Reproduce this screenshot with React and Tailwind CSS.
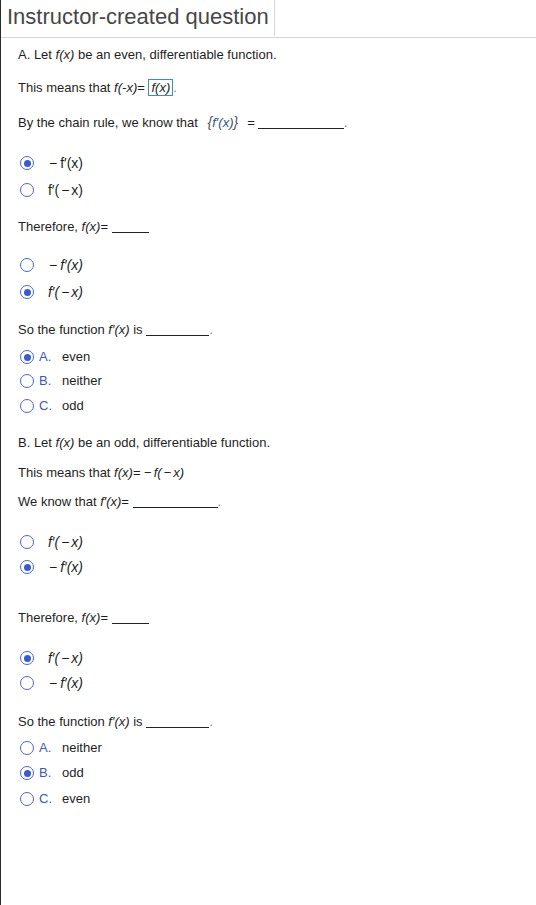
import React from 'react';

const Radio = ({ checked }) => (
    <span className="w-[14px] h-[14px] shrink-0 rounded-full border-[1.5px] border-[#4a66d6] flex items-center justify-center bg-white">
        {checked && <span className="w-[7px] h-[7px] rounded-full bg-[#3a59d6]" />}
    </span>
);

const Blank = ({ w }) => (
    <span className="inline-block border-b border-[#222] translate-y-[2px]" style={{ width: w }} />
);

const M = ({ children }) => <i className="italic">{children}</i>;

// radio row with right-aligned math label
const MathOption = ({ checked, children, className }) => (
    <div className={`h-[20px] flex items-center ${className}`}>
        <span className="ml-[2px]"><Radio checked={checked} /></span>
        <span className="ml-[13px] w-[36px] flex justify-end whitespace-nowrap text-[14px]">{children}</span>
    </div>
);

const LetterOption = ({ checked, letter, label, className }) => (
    <div className={`h-[20px] flex items-center ${className}`}>
        <span className="ml-[2px]"><Radio checked={checked} /></span>
        <span className="ml-[5px] w-[23px] text-[#3a55cc]">{letter}</span>
        <span>{label}</span>
    </div>
);

const Line = ({ children, className }) => (
    <div className={`h-[20px] flex items-center whitespace-nowrap ${className}`}>
        <span>{children}</span>
    </div>
);

export default function App() {
    return (
        <div className="min-h-[905px] bg-white border-l border-[#2a2a2a] font-['Liberation_Sans',Arial,sans-serif] text-[13px] text-[#1e1e1e]">
            {/* header tab */}
            <div className="flex border-b border-[#d3d6dd] h-[38px]">
                <div className="h-[36px] pl-[6px] pr-[5px] border-r border-[#d3d6dd] text-[22px] leading-[34px] text-[#474747]">
                    Instructor-created question
                </div>
            </div>

            <div className="pl-[17px]">
                {/* Part A */}
                <Line className="mt-[7px]">A. Let <M>f(x)</M> be an even, differentiable function.</Line>
                <Line className="mt-[13px]">
                    This means that <M>f(-x)</M>={' '}
                    <span className="inline-block border border-[#3a8fbf] px-[2px] leading-[15px]"><M>f(x)</M></span>
                    <span className="text-[#777]">.</span>
                </Line>
                <Line className="mt-[14px]">
                    By the chain rule, we know that{' '}
                    <span className="ml-[6px] text-[#555] italic text-[14px]">{'{'}</span>
                    <span className="italic text-[#34557f]">f′(x)</span>
                    <span className="text-[#555] italic text-[14px]">{'}'}</span>
                    <span className="ml-[9px] mr-[3px]">=</span>
                    <Blank w={86} />
                    <span className="text-[#777]">.</span>
                </Line>

                <MathOption checked className="mt-[21px]"><span className="mr-[3px]">−</span>f′(x)</MathOption>
                <MathOption className="mt-[7px]">f′(<span className="mx-[2px]">−</span>x)</MathOption>

                <Line className="mt-[17px]">Therefore, <M>f(x)</M>= <Blank w={37} /></Line>

                <MathOption className="mt-[18px]"><span className="mr-[3px]">−</span><M>f′(x)</M></MathOption>
                <MathOption checked className="mt-[7px]"><M>f′(</M><span className="mx-[2px]">−</span><M>x)</M></MathOption>

                <Line className="mt-[18px]">So the function <M>f′(x)</M> is <Blank w={63} /><span className="text-[#777]">.</span></Line>
                <LetterOption checked letter="A." label="even" className="mt-[7px]" />
                <LetterOption letter="B." label="neither" className="mt-[4px]" />
                <LetterOption letter="C." label="odd" className="mt-[5px]" />

                {/* Part B */}
                <Line className="mt-[17px]">B. Let <M>f(x)</M> be an odd, differentiable function.</Line>
                <Line className="mt-[10px]">This means that <M>f(x)</M>= <span className="mr-[2px]">−</span><M>f(</M><span className="mx-[2px]">−</span><M>x)</M></Line>
                <Line className="mt-[9px]">We know that <M>f′(x)</M>= <Blank w={85} /><span className="text-[#777]">.</span></Line>

                <MathOption className="mt-[20px]"><M>f′(</M><span className="mx-[2px]">−</span><M>x)</M></MathOption>
                <MathOption checked className="mt-[5px]"><span className="mr-[3px]">−</span><M>f′(x)</M></MathOption>

                <Line className="mt-[31px]">Therefore, <M>f(x)</M>= <Blank w={37} /></Line>

                <MathOption checked className="mt-[20px]"><M>f′(</M><span className="mx-[2px]">−</span><M>x)</M></MathOption>
                <MathOption className="mt-[5px]"><span className="mr-[3px]">−</span><M>f′(x)</M></MathOption>

                <Line className="mt-[19px]">So the function <M>f′(x)</M> is <Blank w={63} /><span className="text-[#777]">.</span></Line>
                <LetterOption letter="A." label="neither" className="mt-[6px]" />
                <LetterOption checked letter="B." label="odd" className="mt-[5px]" />
                <LetterOption letter="C." label="even" className="mt-[6px]" />
            </div>
        </div>
    );
}
